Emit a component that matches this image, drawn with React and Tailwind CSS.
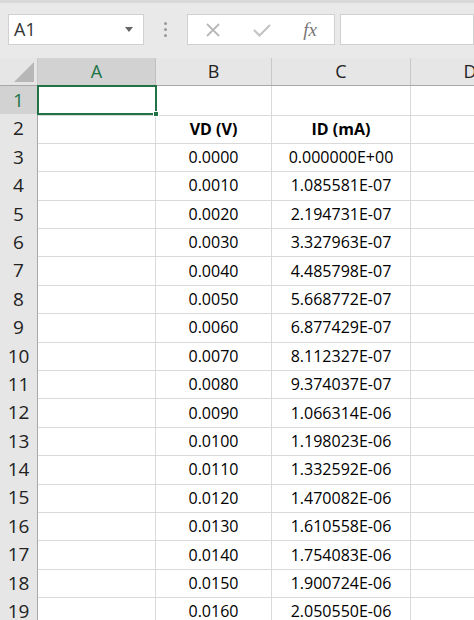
import React from "react";

const rows = [
  ["", ""],
  ["VD (V)", "ID (mA)"],
  ["0.0000", "0.000000E+00"],
  ["0.0010", "1.085581E-07"],
  ["0.0020", "2.194731E-07"],
  ["0.0030", "3.327963E-07"],
  ["0.0040", "4.485798E-07"],
  ["0.0050", "5.668772E-07"],
  ["0.0060", "6.877429E-07"],
  ["0.0070", "8.112327E-07"],
  ["0.0080", "9.374037E-07"],
  ["0.0090", "1.066314E-06"],
  ["0.0100", "1.198023E-06"],
  ["0.0110", "1.332592E-06"],
  ["0.0120", "1.470082E-06"],
  ["0.0130", "1.610558E-06"],
  ["0.0140", "1.754083E-06"],
  ["0.0150", "1.900724E-06"],
  ["0.0160", "2.050550E-06"],
];

const font = { fontFamily: '"Open Sans", "Liberation Sans", sans-serif' };

export default function App() {
  return (
    <div className="w-[474px] h-[620px] overflow-hidden bg-white" style={font}>
      {/* formula bar */}
      <div className="h-[58px] bg-[#e9e9e9] border-t-[3px] border-[#d9d9d9] flex items-start pt-[11px]">
        <div className="ml-[8px] w-[136px] h-[31px] bg-white border border-[#d0d0d0] flex items-center justify-between pl-[5px] pr-[10px]">
          <span className="text-[18px] text-[#333]">A1</span>
          <svg width="8" height="5" viewBox="0 0 8 5"><path d="M0 0 L8 0 L4 5 Z" fill="#666" /></svg>
        </div>
        <div className="w-[43px] h-[31px] flex flex-col items-center justify-center gap-[3px]">
          <span className="w-[3px] h-[3px] rounded-full bg-[#999]" />
          <span className="w-[3px] h-[3px] rounded-full bg-[#999]" />
          <span className="w-[3px] h-[3px] rounded-full bg-[#999]" />
        </div>
        <div className="w-[148px] h-[31px] bg-white border border-[#d0d0d0] flex items-center">
          <div className="w-[48px] flex justify-center ml-[1px]">
            <svg width="16" height="16" viewBox="0 0 16 16"><path d="M2 2 L14 14 M14 2 L2 14" stroke="#b9b9b9" strokeWidth="1.8" /></svg>
          </div>
          <div className="w-[50px] flex justify-center">
            <svg width="18" height="14" viewBox="0 0 18 14"><path d="M1 7 L6.5 12.5 L17 2" stroke="#c4c4c4" strokeWidth="2.2" fill="none" /></svg>
          </div>
          <div className="w-[48px] flex justify-center">
            <span className="text-[19px] italic text-[#777] leading-none" style={{ fontFamily: '"Liberation Serif", serif' }}>fx</span>
          </div>
        </div>
        <div className="ml-[5px] flex-1 h-[31px] bg-white border border-[#d0d0d0]" />
      </div>

      {/* column header */}
      <div className="grid grid-cols-[38px_118px_116px_139px_118px] h-[28px] bg-[#e6e6e6] border-b border-[#a8a8a8] text-[18px] text-[#222]">
        <div className="relative border-r border-[#c8c8c8]">
          <svg className="absolute right-[3px] bottom-[3px]" width="20" height="20" viewBox="0 0 20 20"><path d="M20 0 L20 20 L0 20 Z" fill="#b7b7b7" /></svg>
        </div>
        <div className="bg-[#d2d2d2] flex items-center justify-center text-[#217346] border-r border-[#c0c0c0]">A</div>
        <div className="flex items-center justify-center border-r border-[#c8c8c8]">B</div>
        <div className="flex items-center justify-center border-r border-[#c8c8c8]">C</div>
        <div className="flex items-center justify-center">D</div>
      </div>

      {/* rows */}
      <div className="relative">
        {rows.map((r, i) => (
          <div key={i} className="grid grid-cols-[38px_118px_116px_139px_118px] h-[28.4px]">
            <div className={`border-r border-[#a8a8a8] border-b border-b-[#cfcfcf] flex items-center justify-center text-[19px] ${i === 0 ? "text-[#217346] bg-[#d2d2d2]" : "text-[#222] bg-[#e6e6e6]"}`}>
              {i + 1}
            </div>
            <div className="border-r border-b border-[#d9d9d9]" />
            <div className={`border-r border-b border-[#d9d9d9] flex items-center justify-center text-[16px] text-[#000] ${i === 1 ? "font-bold" : ""}`}>{r[0]}</div>
            <div className={`border-r border-b border-[#d9d9d9] flex items-center justify-center text-[16px] text-[#000] ${i === 1 ? "font-bold" : ""}`}>{r[1]}</div>
            <div className="border-b border-[#d9d9d9]" />
          </div>
        ))}
        <div className="absolute left-[37px] top-[-1px] w-[120px] h-[30px] border-2 border-[#217346]">
          <div className="absolute right-[-4px] bottom-[-4px] w-[6px] h-[6px] bg-[#217346] border border-white" />
        </div>
      </div>
    </div>
  );
}
